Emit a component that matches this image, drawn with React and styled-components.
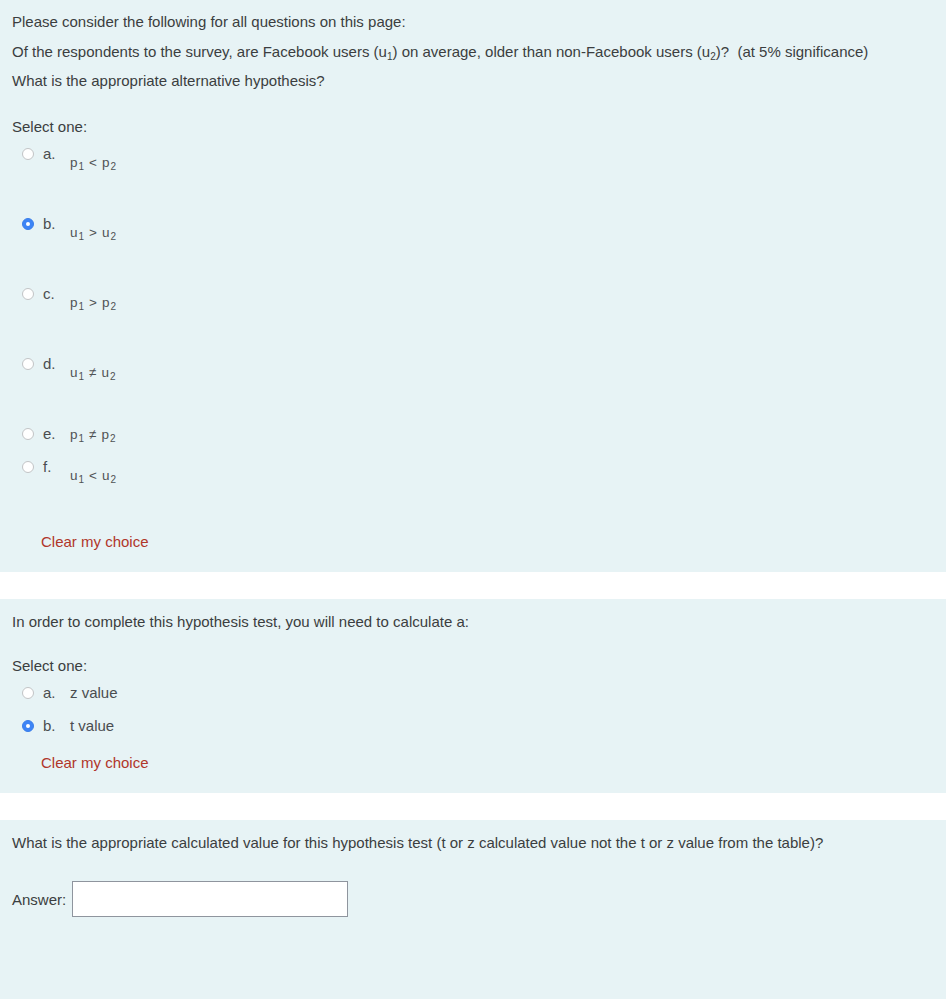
import React from "react";
import styled, { createGlobalStyle } from "styled-components";

const Global = createGlobalStyle`
  html, body { margin: 0; padding: 0; background: #ffffff; }
  body { font-family: "Liberation Sans", Arial, sans-serif; color: #3b3e40; }
`;

const Page = styled.div`
  display: flex;
  flex-direction: column;
  gap: 27px;
`;

const Panel = styled.section`
  background: #e7f3f5;
  padding: 12px 12px ${(p) => (p.$fill ? "82px" : "19px")};
`;

const Para = styled.p`
  margin: 0 0 ${(p) => p.$gap ?? 8}px;
  font-size: 15px;
  line-height: 22px;
`;

const Prompt = styled.div`
  font-size: 15px;
  line-height: 22px;
  margin: ${(p) => p.$top}px 0 5px;
`;

const OptionList = styled.div`
  display: flex;
  flex-direction: column;
`;

const Option = styled.label`
  display: flex;
  align-items: flex-start;
  padding-left: 10px;
  min-height: ${(p) => (p.$tall ? "70px" : "33px")};
  font-size: 15px;
  line-height: 22px;
`;

const Radio = styled.span`
  flex: none;
  width: 12px;
  height: 12px;
  margin-top: 5px;
  border-radius: 50%;
  box-sizing: border-box;
  background: ${(p) => (p.$checked ? "#3d84f6" : "#ffffff")};
  border: 1px solid ${(p) => (p.$checked ? "#3a7ee9" : "#c2c4c6")};
  display: flex;
  align-items: center;
  justify-content: center;
  &::after {
    content: "";
    width: 4px;
    height: 4px;
    border-radius: 50%;
    background: #fff;
    display: ${(p) => (p.$checked ? "block" : "none")};
  }
`;

const Letter = styled.span`
  flex: none;
  width: 27px;
  margin-left: 9px;
  color: #4a4d50;
`;

const Math = styled.span`
  display: block;
  font-size: 13.5px;
  color: #4f5254;
  padding-top: ${(p) => (p.$drop ? "9px" : "1px")};
`;

const Op = styled.span`
  margin: 0 5px 0 5px;
`;

const Plain = styled.span`
  color: #4a4d50;
`;

const Sub = styled.sub`
  font-size: ${(p) => (p.$math ? "10px" : "10px")};
  vertical-align: -3px;
  line-height: 0;
  margin-left: ${(p) => (p.$math ? "1px" : "0")};
`;

const Clear = styled.a`
  display: block;
  margin: ${(p) => p.$top}px 0 0 29px;
  font-size: 15px;
  line-height: 22px;
  color: #b0362a;
  text-decoration: none;
  cursor: pointer;
`;

const AnswerRow = styled.div`
  display: flex;
  align-items: center;
  gap: 6px;
  margin-top: 27px;
  font-size: 15px;
`;

const AnswerInput = styled.input`
  width: 276px;
  height: 36px;
  box-sizing: border-box;
  border: 1px solid #8f959e;
  background: #fff;
  outline: none;
`;

const Sym = ({ v, op }) => (
  <>
    {v}
    <Sub $math>1</Sub>
    <Op>{op}</Op>
    {v}
    <Sub $math>2</Sub>
  </>
);

const q1 = [
  { l: "a.", v: "p", op: "<", tall: true },
  { l: "b.", v: "u", op: ">", tall: true, checked: true },
  { l: "c.", v: "p", op: ">", tall: true },
  { l: "d.", v: "u", op: "≠", tall: true },
  { l: "e.", v: "p", op: "≠", tall: false },
  { l: "f.", v: "u", op: "<", tall: true },
];

export default function App() {
  return (
    <>
      <Global />
      <Page>
        <Panel>
          <Para $gap={8} style={{ marginTop: -1 }}>
            Please consider the following for all questions on this page:
          </Para>
          <Para $gap={7}>
            Of the respondents to the survey, are Facebook users (u<Sub>1</Sub>) on average, older than
            non-Facebook users (u<Sub>2</Sub>)?&nbsp; (at 5% significance)
          </Para>
          <Para $gap={0}>What is the appropriate alternative hypothesis?</Para>
          <Prompt $top={24}>Select one:</Prompt>
          <OptionList>
            {q1.map((o) => (
              <Option key={o.l} $tall={o.tall}>
                <Radio $checked={o.checked} />
                <Letter>{o.l}</Letter>
                <Math $drop={o.tall}>
                  <Sym v={o.v} op={o.op} />
                </Math>
              </Option>
            ))}
          </OptionList>
          <Clear $top={5}>Clear my choice</Clear>
        </Panel>
        <Panel>
          <Para $gap={0}>In order to complete this hypothesis test, you will need to calculate a:</Para>
          <Prompt $top={22}>Select one:</Prompt>
          <OptionList>
            <Option>
              <Radio />
              <Letter>a.</Letter>
              <Plain>z value</Plain>
            </Option>
            <Option>
              <Radio $checked />
              <Letter>b.</Letter>
              <Plain>t value</Plain>
            </Option>
          </OptionList>
          <Clear $top={4}>Clear my choice</Clear>
        </Panel>
        <Panel $fill>
          <Para $gap={0}>
            What is the appropriate calculated value for this hypothesis test (t or z calculated value not
            the t or z value from the table)?
          </Para>
          <AnswerRow>
            <span>Answer:</span>
            <AnswerInput type="text" />
          </AnswerRow>
        </Panel>
      </Page>
    </>
  );
}
